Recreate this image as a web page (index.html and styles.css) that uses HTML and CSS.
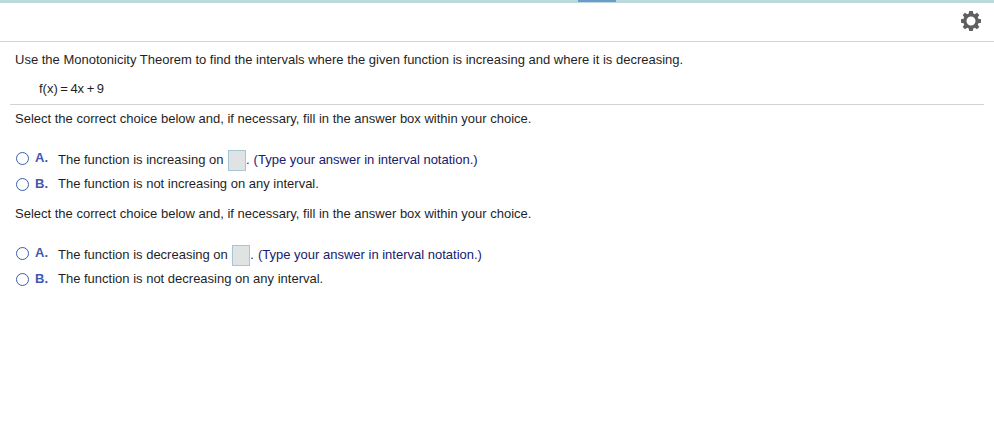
FILE: index.html
```html
<!DOCTYPE html>
<html lang="en">
<head>
<meta charset="utf-8">
<title>Monotonicity Theorem</title>
<link rel="stylesheet" href="styles.css">
</head>
<body>
<div class="topbar"><div class="topbar-tab"></div></div>
<header class="toolbar">
  <svg class="gear" viewBox="0 0 20 20" width="20" height="20" aria-hidden="true">
    <path fill="#5f5f5f" fill-rule="evenodd" d="M8.2 0h3.6l.5 2.6 1.5.6L16 1.7l2.3 2.3-1.5 2.2.6 1.5 2.6.5v3.6l-2.6.5-.6 1.5 1.5 2.2-2.3 2.3-2.2-1.5-1.5.6-.5 2.6H8.2l-.5-2.6-1.5-.6L4 18.3 1.7 16l1.5-2.2-.6-1.5L0 11.8V8.2l2.6-.5.6-1.5L1.7 4 4 1.7l2.2 1.5 1.5-.6zM10 5.5a4.5 4.5 0 1 0 0 9 4.5 4.5 0 0 0 0-9z"/>
  </svg>
</header>
<main class="content">
  <p class="lead">Use the Monotonicity Theorem to find the intervals where the given function is increasing and where it is decreasing.</p>
  <p class="formula">f(x) = 4x + 9</p>
  <hr class="rule">
  <p class="prompt">Select the correct choice below and, if necessary, fill in the answer box within your choice.</p>
  <div class="choices">
    <div class="choice with-box">
      <span class="radio"></span><span class="letter">A.</span>
      <span class="text">The function is increasing on</span><span class="box"></span><span>.</span>
      <span class="hint">(Type your answer in interval notation.)</span>
    </div>
    <div class="choice">
      <span class="radio"></span><span class="letter">B.</span>
      <span class="text">The function is not increasing on any interval.</span>
    </div>
  </div>
  <p class="prompt second">Select the correct choice below and, if necessary, fill in the answer box within your choice.</p>
  <div class="choices">
    <div class="choice with-box">
      <span class="radio"></span><span class="letter">A.</span>
      <span class="text">The function is decreasing on</span><span class="box"></span><span>.</span>
      <span class="hint">(Type your answer in interval notation.)</span>
    </div>
    <div class="choice">
      <span class="radio"></span><span class="letter">B.</span>
      <span class="text">The function is not decreasing on any interval.</span>
    </div>
  </div>
</main>
</body>
</html>
```
FILE: styles.css
```css
* { box-sizing: border-box; }
html, body { margin: 0; padding: 0; background: #fff; }
body {
  font-family: "Liberation Sans", Arial, sans-serif;
  font-size: 13px;
  line-height: 16px;
  color: #1f1f1f;
  overflow: hidden;
}
.topbar {
  height: 3px;
  background: #bcd9dc;
  display: flex;
  justify-content: center;
  padding-left: 200px;
}
.topbar-tab { width: 38px; height: 2px; background: #6a9cc9; }
.toolbar {
  height: 39px;
  border-bottom: 1px solid #d3d3d3;
  display: flex;
  align-items: center;
  justify-content: flex-end;
  padding: 0 13px 2px 0;
}
.gear { display: block; }
.content { padding: 10px 10px 0 15px; }
p { margin: 0; }
.formula { padding: 13px 0 0 24px; word-spacing: -1.1px; }
.rule { border: 0; border-top: 1px solid #d3d3d3; margin: 7px 0 6px -5px; }
.choices { padding-top: 24px; display: flex; flex-direction: column; gap: 6px; }
.choice { display: flex; align-items: center; height: 18px; white-space: pre; }
.radio {
  width: 13px; height: 13px;
  border: 1.5px solid #3a5fa8;
  border-radius: 50%;
  margin: 0 6px 0 1px;
}
.letter { width: 23px; font-weight: bold; color: #3f58b0; }
.with-box .radio { margin-bottom: 4px; }
.with-box .letter { margin-bottom: 4px; }
.box {
  width: 18px; height: 21px;
  background: #e0e3e4;
  border: 1px solid #a7c6d3;
  margin: 0 0 0 4.5px;
}
.hint { color: #16206e; margin-left: 4px; }
.second { padding-top: 13px; }
```
